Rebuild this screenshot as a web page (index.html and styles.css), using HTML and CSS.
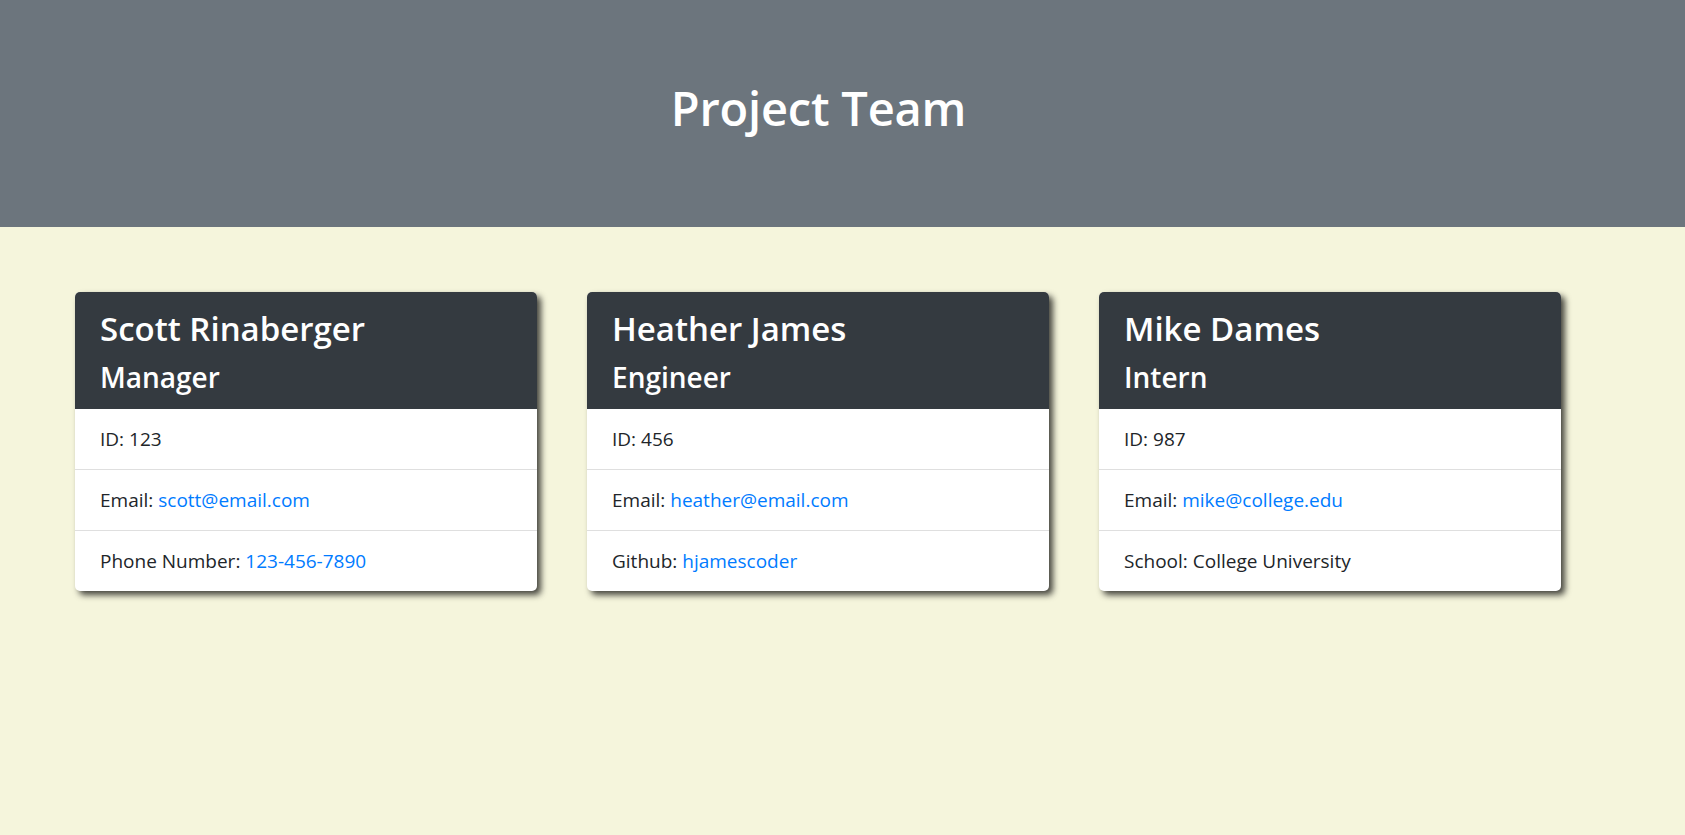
FILE: index.html
```html
<!DOCTYPE html>
<html lang="en">
<head>
<meta charset="utf-8">
<title>Project Team</title>
<link rel="stylesheet" href="styles.css">
</head>
<body>
<header class="banner">
  <h1 class="banner-title">Project Team</h1>
</header>
<main class="team">
  <section class="card">
    <div class="card-header">
      <h2 class="card-name">Scott Rinaberger</h2>
      <h3 class="card-role">Manager</h3>
    </div>
    <ul class="card-list">
      <li class="card-item">ID: 123</li>
      <li class="card-item">Email: <a href="#">scott@email.com</a></li>
      <li class="card-item">Phone Number: <a href="#">123-456-7890</a></li>
    </ul>
  </section>
  <section class="card">
    <div class="card-header">
      <h2 class="card-name">Heather James</h2>
      <h3 class="card-role">Engineer</h3>
    </div>
    <ul class="card-list">
      <li class="card-item">ID: 456</li>
      <li class="card-item">Email: <a href="#">heather@email.com</a></li>
      <li class="card-item">Github: <a href="#">hjamescoder</a></li>
    </ul>
  </section>
  <section class="card">
    <div class="card-header">
      <h2 class="card-name">Mike Dames</h2>
      <h3 class="card-role">Intern</h3>
    </div>
    <ul class="card-list">
      <li class="card-item">ID: 987</li>
      <li class="card-item">Email: <a href="#">mike@college.edu</a></li>
      <li class="card-item">School: College University</li>
    </ul>
  </section>
</main>
</body>
</html>
```
FILE: styles.css
```css
html, body {
  margin: 0;
  padding: 0;
}
body {
  background: #f5f5dc;
  font-family: "Open Sans", "Noto Sans", "Liberation Sans", sans-serif;
  color: #212529;
  width: 1685px;
  height: 835px;
  overflow: hidden;
}
.banner {
  background: #6c757d;
  height: 227px;
  box-sizing: border-box;
  padding: 80px 48px 0 0;
  text-align: center;
}
.banner-title {
  margin: 0;
  color: #fff;
  font-size: 47px;
  font-weight: 600;
  line-height: 56px;
  letter-spacing: -0.2px;
}
.team {
  display: flex;
  gap: 50px;
  padding: 65px 0 0 75px;
}
.card {
  width: 462px;
  background: #fff;
  border-radius: 5px;
  box-shadow: 4px 4px 6px rgba(0, 0, 0, 0.72);
  overflow: hidden;
}
.card-header {
  background: #343a40;
  color: #fff;
  padding: 17px 25px 15px;
}
.card-name {
  margin: 0 0 12px;
  font-size: 33px;
  font-weight: 600;
  line-height: 40px;
}
.card-role {
  margin: 0;
  font-size: 28px;
  font-weight: 600;
  line-height: 33px;
}
.card-list {
  list-style: none;
  margin: 0;
  padding: 0;
}
.card-item {
  padding: 15px 25px;
  font-size: 19px;
  line-height: 30px;
}
.card-item + .card-item {
  border-top: 1px solid #dfdfdf;
}
.card-item a {
  color: #007bff;
  text-decoration: none;
}
```
